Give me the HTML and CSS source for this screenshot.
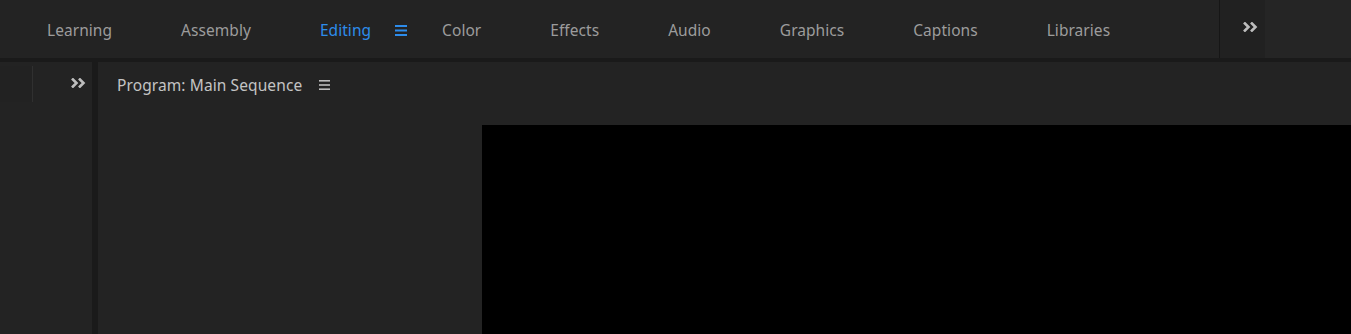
FILE: index.html
```html
<!DOCTYPE html>
<html>
<head>
<meta charset="utf-8">
<link rel="stylesheet" href="styles.css">
</head>
<body>
<div class="app">
  <header class="topbar">
    <nav class="tabs">
      <span class="tab">Learning</span>
      <span class="tab">Assembly</span>
      <span class="tab active">Editing
        <svg class="menu" width="12" height="11" viewBox="0 0 12 11"><rect x="0" y="0" width="12" height="2"/><rect x="0" y="4.5" width="12" height="2"/><rect x="0" y="9" width="12" height="2"/></svg>
      </span>
      <span class="tab">Color</span>
      <span class="tab">Effects</span>
      <span class="tab">Audio</span>
      <span class="tab">Graphics</span>
      <span class="tab">Captions</span>
      <span class="tab">Libraries</span>
    </nav>
    <div class="more">
      <svg width="15" height="10" viewBox="0 0 15 10"><path d="M1 0.5 L5.5 5 L1 9.5 M8 0.5 L12.5 5 L8 9.5" fill="none" stroke="#bdbdbd" stroke-width="2.6"/></svg>
    </div>
    <div class="rest"></div>
  </header>
  <div class="sep"></div>
  <main class="panels">
    <aside class="side">
      <div class="side-strip"></div>
      <div class="side-head">
        <svg width="15" height="10" viewBox="0 0 15 10"><path d="M1 0.5 L5.5 5 L1 9.5 M8 0.5 L12.5 5 L8 9.5" fill="none" stroke="#bdbdbd" stroke-width="2.6"/></svg>
      </div>
    </aside>
    <div class="divider"></div>
    <section class="program">
      <div class="prog-head">
        <span class="prog-title">Program: Main Sequence</span>
        <svg class="prog-menu" width="11" height="10" viewBox="0 0 11 10"><rect x="0" y="0" width="11" height="1.6"/><rect x="0" y="4.2" width="11" height="1.6"/><rect x="0" y="8.4" width="11" height="1.6"/></svg>
      </div>
      <div class="prog-body">
        <div class="prog-left"></div>
        <div class="monitor"></div>
      </div>
    </section>
  </main>
</div>
</body>
</html>
```

FILE: styles.css
```css
* { box-sizing: border-box; }
html, body { margin: 0; padding: 0; background: #232323; overflow: hidden; }
body { width: 1351px; height: 334px; font-family: "Noto Sans", "Open Sans", sans-serif; }
.app { display: flex; flex-direction: column; height: 334px; }
.topbar { height: 58px; display: flex; background: #232323; flex: none; }
.tabs { display: flex; align-items: center; width: 1220px; padding: 2px 0 0 12.5px; border-right: 1px solid #161616; }
.tab { font-size: 15.5px; color: #9c9c9c; padding: 0 34.5px; display: flex; align-items: center; line-height: 20px; letter-spacing: 0.05px; }
.tab.active { color: #2d8ceb; }
.tab .menu { fill: #2d8ceb; margin-left: 24px; margin-right: -34px; }
.more { width: 45px; background: #212121; display: flex; align-items: center; padding: 0 0 4px 23px; }
.rest { flex: 1; background: #252525; }
.sep { height: 4px; background: #1a1a1a; flex: none; }
.panels { flex: 1; display: flex; }
.side { width: 92px; display: flex; background: #232323; padding-top: 4px; }
.side-strip { width: 33px; height: 36px; border-right: 1px solid #303030; background: #222222; }
.side-head { flex: 1; display: flex; justify-content: flex-end; padding: 12px 6px 0 0; height: 36px; }
.divider { width: 6px; background: #1a1a1a; }
.program { flex: 1; display: flex; flex-direction: column; background: #232323; }
.prog-head { height: 44px; display: flex; align-items: center; padding: 2px 0 0 19px; }
.prog-title { font-size: 15.5px; color: #c4c4c4; letter-spacing: 0.1px; }
.prog-menu { fill: #bdbdbd; margin-left: 17px; }
.prog-body { flex: 1; display: flex; padding-top: 19px; }
.prog-left { width: 384px; }
.monitor { flex: 1; background: #000; }
```
